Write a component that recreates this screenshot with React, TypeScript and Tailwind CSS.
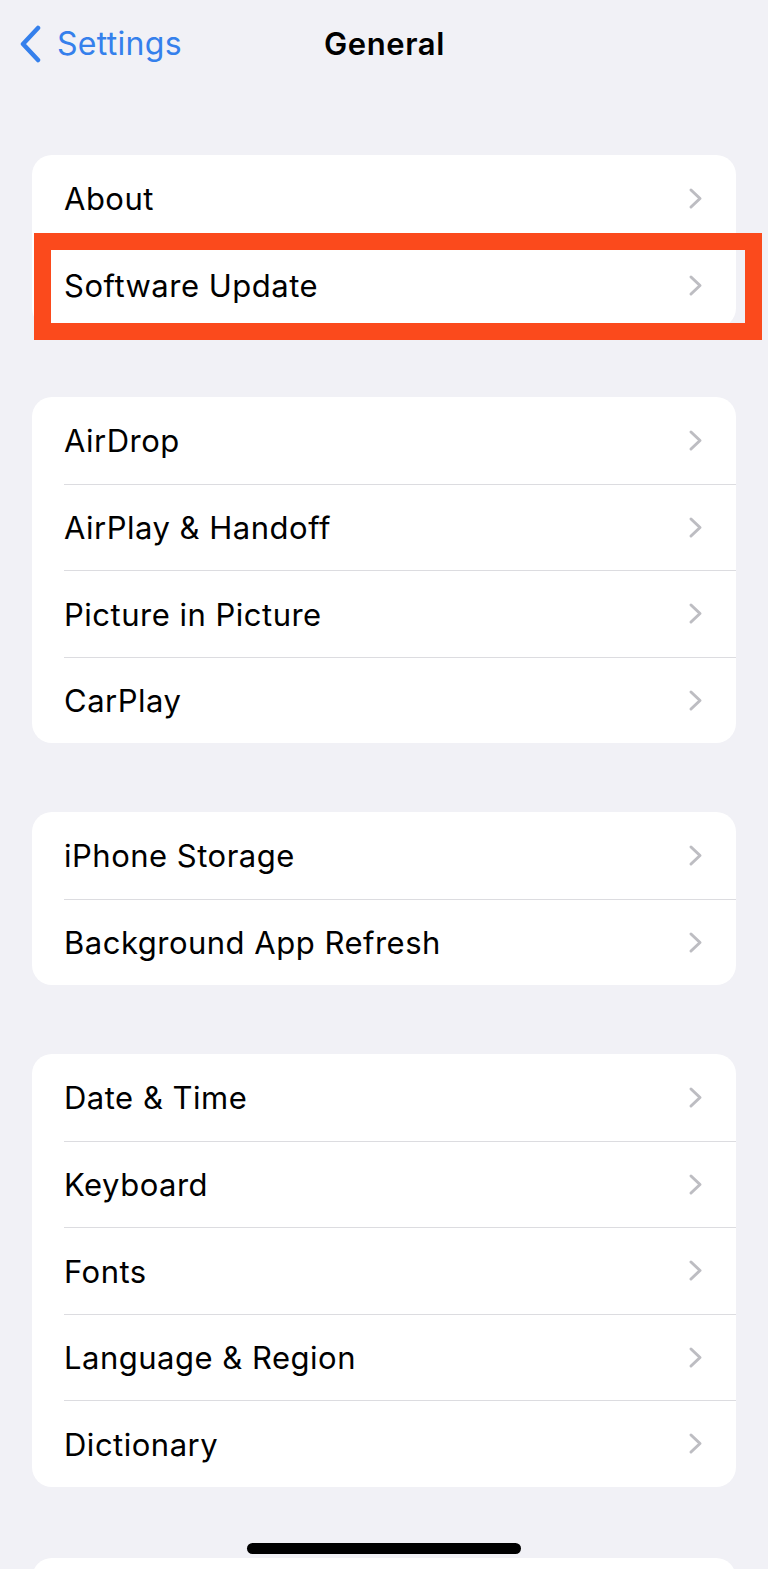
const groups: string[][] = [
  ["About", "Software Update"],
  ["AirDrop", "AirPlay & Handoff", "Picture in Picture", "CarPlay"],
  ["iPhone Storage", "Background App Refresh"],
  ["Date & Time", "Keyboard", "Fonts", "Language & Region", "Dictionary"],
];

const Chevron = () => (
  <svg width="15" height="23" viewBox="0 0 15 23" fill="none" className="shrink-0">
    <path d="M3 3l9 8.5L3 20" stroke="#bdbdc2" strokeWidth="3" strokeLinecap="round" strokeLinejoin="round" />
  </svg>
);

const Row = ({ label, first, highlight }: { label: string; first: boolean; highlight?: boolean }) => (
  <div className="relative h-[86.5px] pl-8">
    <div className={`h-full flex items-center pr-[33px] ${first ? "" : "border-t border-[#dcdce0]"}`}>
      <span className="flex-1 text-[31px] text-black tracking-[0.5px] pt-[2px]">{label}</span>
      <Chevron />
    </div>
    {highlight && (
      <div className="absolute left-[2px] -right-[26px] -top-[9px] h-[107px] border-[17px] border-[#fb4a1c] pointer-events-none" />
    )}
  </div>
);

export default function App() {
  return (
    <div className="w-[768px] h-[1569px] overflow-hidden bg-[#f1f1f6] font-['Inter',sans-serif]">
      <header className="relative h-[90px] flex items-center">
        <div className="flex items-center gap-[15px] pl-[20px] pb-[2px]">
          <svg width="22" height="38" viewBox="0 0 22 38" fill="none">
            <path d="M18 3L3 19l15 16" stroke="#3580ec" strokeWidth="4.5" strokeLinecap="round" strokeLinejoin="round" />
          </svg>
          <span className="text-[32px] text-[#3580ec] tracking-[0.3px]">Settings</span>
        </div>
        <h1 className="absolute left-0 right-0 text-center text-[31px] font-semibold text-black tracking-[0.6px] pb-[2px] pl-[1px]">
          General
        </h1>
      </header>

      <main className="flex flex-col gap-[69px] pt-[65px] px-8">
        {groups.map((g, gi) => (
          <section key={gi} className="bg-white rounded-[20px]">
            {g.map((label, i) => (
              <Row key={label} label={label} first={i === 0} highlight={label === "Software Update"} />
            ))}
          </section>
        ))}
      </main>

      <div className="relative mt-[56px]">
        <div className="mx-auto w-[274px] h-[11px] rounded-full bg-black" />
        <div className="mt-[4px] mx-8 h-[40px] bg-white rounded-t-[20px]" />
      </div>
    </div>
  );
}
